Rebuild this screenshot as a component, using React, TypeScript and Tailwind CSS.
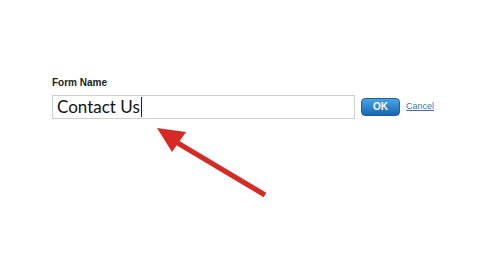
import React from "react";

export default function App() {
  return (
    <div className="relative w-[484px] h-[261px] bg-white overflow-hidden">
      <div className="flex flex-col pt-[77px] pl-[52px]">
        <div className="text-[10px] leading-[12px] font-bold text-[#222]" style={{ fontFamily: '"Liberation Sans", Arial, sans-serif' }}>
          Form Name
        </div>
        <div className="flex items-center mt-[6px]">
          <div className="w-[303px] h-[24px] border border-[#cfcfcf] flex items-center pl-[4px]">
            <span className="text-[17px] leading-[20px] text-[#111]" style={{ fontFamily: 'Lato, "Open Sans", sans-serif' }}>
              Contact Us
            </span>
            <span className="w-[1px] h-[20px] bg-[#222] ml-[1px]" />
          </div>
          <button
            className="ml-[6px] w-[39px] h-[18px] rounded-[4px] bg-gradient-to-b from-[#4aa3e6] to-[#1766b3] border border-[#1a62a8] text-white text-[10px] font-bold leading-none flex items-center justify-center"
            style={{ fontFamily: '"Liberation Sans", Arial, sans-serif' }}
          >
            OK
          </button>
          <a
            href="#"
            className="ml-[6px] text-[9px] text-[#3a74c4] underline"
            style={{ fontFamily: '"Liberation Sans", Arial, sans-serif' }}
          >
            Cancel
          </a>
        </div>
      </div>
      <svg className="absolute left-0 top-0" width="484" height="261" viewBox="0 0 484 261">
        <line x1="176" y1="142" x2="265" y2="195" stroke="#d62a24" strokeWidth="5" strokeLinecap="butt" />
        <polygon points="157,128 186,132 172,152" fill="#d62a24" />
      </svg>
    </div>
  );
}
